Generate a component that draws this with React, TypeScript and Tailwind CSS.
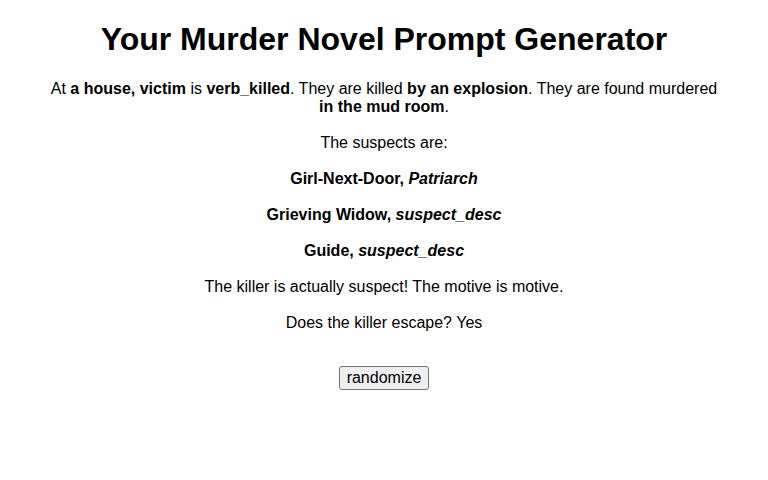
const suspects = [
  { name: 'Girl-Next-Door', desc: 'Patriarch' },
  { name: 'Grieving Widow', desc: 'suspect_desc' },
  { name: 'Guide', desc: 'suspect_desc' },
];

export default function App() {
  return (
    <div className="min-h-[480px] bg-white px-2 text-center text-[16px] leading-[18.4px] text-black font-['Liberation_Sans',Arial,sans-serif]">
      <h1 className="pt-[21px] text-[32px] font-bold leading-[37px]">Your Murder Novel Prompt Generator</h1>
      <p className="mx-auto mt-[22px] max-w-[680px]">
        At <b>a house, victim</b> is <b>verb_killed</b>. They are killed <b>by an explosion</b>. They are
        found murdered <b>in the mud room</b>.
      </p>
      <p className="mt-[17px]">The suspects are:</p>
      {suspects.map((s) => (
        <p key={s.name} className="mt-[17.6px] font-bold">
          {s.name}, <i>{s.desc}</i>
        </p>
      ))}
      <p className="mt-[17.6px]">The killer is actually suspect! The motive is motive.</p>
      <p className="mt-[17.6px]">Does the killer escape? Yes</p>
      <div className="mt-[34px]">
        <button className="h-[24px] rounded-[3px] border border-[#767676] bg-[#efefef] px-[7px] text-[16px] leading-[18px] text-black">
          randomize
        </button>
      </div>
    </div>
  );
}
